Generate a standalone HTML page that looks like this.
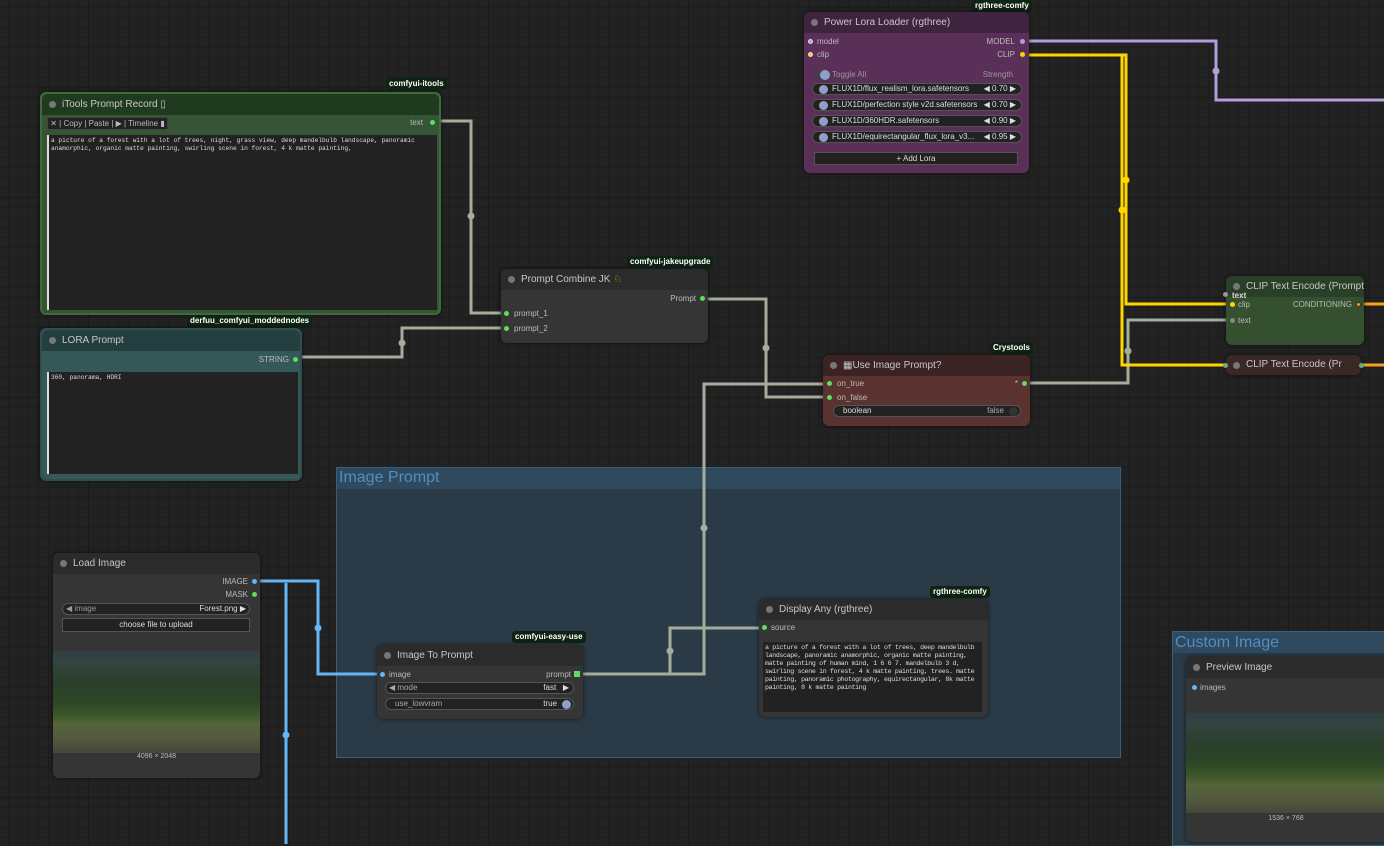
<!DOCTYPE html>
<html><head><meta charset="utf-8"><style>
*{box-sizing:border-box;margin:0;padding:0}
body{width:1384px;height:844px;overflow:hidden;position:relative;font-family:"Liberation Sans",sans-serif;
background-color:#222;
background-image:linear-gradient(#1a1a1a 1px,transparent 1px),linear-gradient(90deg,#1a1a1a 1px,transparent 1px),linear-gradient(#1d1d1d 1px,transparent 1px),linear-gradient(90deg,#1d1d1d 1px,transparent 1px);
background-size:100px 100px,100px 100px,10px 10px,10px 10px;background-position:-12px -3px}
.abs{position:absolute}
.node{position:absolute;border-radius:6px;background:#353535;box-shadow:0 0 4px rgba(0,0,0,.6);font-size:9px;color:#bbb}
.title{height:21px;border-radius:6px 6px 0 0;background:#2b2b2b;color:#c8c8c8;font-size:10px;line-height:21px;padding-left:20px;position:relative;white-space:nowrap;overflow:hidden}
.title:before{content:"";position:absolute;left:7px;top:7px;width:7px;height:7px;border-radius:50%;background:#777}
.badge{position:absolute;background:#0e2312;color:#fff;font-size:8px;font-weight:bold;height:12px;line-height:12px;padding:0 3px;border-radius:3px}
.slot{position:absolute;font-size:8px;color:#bbb;white-space:nowrap}
.dot{position:absolute;width:5px;height:5px;border-radius:50%}
.g{background:#5dde5d}
.ta{position:absolute;background:#222;font-family:"Liberation Mono",monospace;font-size:6.2px;color:#ddd;line-height:8px;padding:2px 2px}
.wid{position:absolute;height:12px;border-radius:6px;background:#222;border:1px solid #555;font-size:8px;color:#ddd;line-height:10px}
.forest{position:absolute;background:linear-gradient(180deg,#2f3f42 0%,#34443f 12%,#2a3f2c 30%,#2c4626 50%,#3a5628 62%,#55653a 72%,#535a3e 85%,#46483a 100%)}
</style></head><body>

<div class="abs" style="left:336px;top:467px;width:785px;height:291px;background:#2a3a47;border:1px solid #3b5f7a"></div>
<div class="abs" style="left:337px;top:468px;width:783px;height:21px;background:#2f4a5e;color:#4f8ec4;font-size:16px;line-height:20px;padding-left:2px">Image Prompt</div>
<div class="abs" style="left:1172px;top:631px;width:214px;height:215px;background:#2a3a47;border:1px solid #3b5f7a"></div>
<div class="abs" style="left:1173px;top:632px;width:212px;height:21px;background:#2f4a5e;color:#4f8ec4;font-size:16px;line-height:21px;padding-left:2px">Custom Image</div>

<svg class="abs" style="left:0;top:0" width="1384" height="844">
<g fill="none" stroke-width="3">
<g stroke="#a4ad9c">
<path d="M441 121H471V313H506"/>
<path d="M297 357H402V328H506"/>
<path d="M702 299H766V397H829"/>
<path d="M577 674H704V384H829"/>
<path d="M670 674V628H764"/>
<path d="M1024 383H1128V320H1232"/>
</g>
<path d="M1022 41H1216V100H1384" stroke="#b39ddb"/>
<path d="M1022 55H1126V304H1232" stroke="#ffd500"/>
<path d="M1022 55H1122V365H1226" stroke="#ffd500"/>
<path d="M1357 304H1384M1361 365H1384" stroke="#ff9f1a"/>
<path d="M254 581H318V674H382M286 583V844" stroke="#64b5f6"/>
</g>
<g fill="#a4ad9c"><circle cx="471" cy="216" r="3.5"/><circle cx="402" cy="343" r="3.5"/><circle cx="766" cy="348" r="3.5"/><circle cx="704" cy="528" r="3.5"/><circle cx="670" cy="651" r="3.5"/><circle cx="1128" cy="351" r="3.5"/></g>
<circle cx="1216" cy="71" r="3.5" fill="#b39ddb"/>
<circle cx="1126" cy="180" r="3.5" fill="#ffd500"/><circle cx="1122" cy="210" r="3.5" fill="#ffd500"/>
<circle cx="318" cy="628" r="3.5" fill="#64b5f6"/><circle cx="286" cy="735" r="3.5" fill="#64b5f6"/>
</svg>

<div class="badge" style="left:386px;top:78px">comfyui-itools</div>
<div class="node" style="left:40px;top:92px;width:401px;height:223px;background:#355535;border:2px solid #3d6b3d">
 <div class="title" style="background:#203a20">iTools Prompt Record ▯</div>
 <div class="abs" style="left:5px;top:23px;height:13px;background:#222;border:1px solid #444;font-size:8px;color:#bbb;line-height:11px;white-space:nowrap">&nbsp;✕ | Copy | Paste | ▶ | Timeline ▮&nbsp;</div>
 <div class="slot" style="right:16px;top:24px">text</div><div class="dot g" style="right:4px;top:26px"></div>
 <div class="ta" style="left:5px;top:41px;width:390px;height:175px;border-left:2px solid #ddd">a picture of a forest with a lot of trees, night, grass view, deep mandelbulb landscape, panoramic anamorphic, organic matte painting, swirling scene in forest, 4 k matte painting,</div>
</div>

<div class="badge" style="left:187px;top:315px">derfuu_comfyui_moddednodes</div>
<div class="node" style="left:40px;top:328px;width:262px;height:153px;background:#355858;border:2px solid #2f4f4f">
 <div class="title" style="background:#233e3e">LORA Prompt</div>
 <div class="slot" style="right:11px;top:25px">STRING</div><div class="dot g" style="right:2px;top:27px"></div>
 <div class="ta" style="left:5px;top:42px;width:251px;height:102px;border-left:2px solid #ddd">360, panorama, HDRI</div>
</div>

<div class="badge" style="left:627px;top:256px">comfyui-jakeupgrade</div>
<div class="node" style="left:501px;top:269px;width:207px;height:74px">
 <div class="title">Prompt Combine JK <span style="color:#c8a000">♘</span></div>
 <div class="slot" style="right:12px;top:25px">Prompt</div><div class="dot g" style="right:3px;top:27px"></div>
 <div class="dot g" style="left:3px;top:42px"></div><div class="slot" style="left:13px;top:40px">prompt_1</div>
 <div class="dot g" style="left:3px;top:57px"></div><div class="slot" style="left:13px;top:55px">prompt_2</div>
</div>

<div class="badge" style="left:972px;top:0px">rgthree-comfy</div>
<div class="node" style="left:804px;top:12px;width:225px;height:161px;background:#5a3058">
 <div class="title" style="background:#3f2440">Power Lora Loader (rgthree)</div>
 <div class="dot" style="left:4px;top:27px;background:#b39ddb;border:1px solid #ddd"></div><div class="slot" style="left:13px;top:25px">model</div>
 <div class="dot" style="left:4px;top:40px;background:#ffd500;border:1px solid #ddd"></div><div class="slot" style="left:13px;top:38px">clip</div>
 <div class="slot" style="right:14px;top:25px">MODEL</div><div class="dot" style="right:4px;top:27px;background:#b39ddb"></div>
 <div class="slot" style="right:14px;top:38px">CLIP</div><div class="dot" style="right:4px;top:40px;background:#ffd500"></div>
 <div class="abs" style="left:10px;top:59px;width:18px;height:9px;border-radius:5px;background:#4a3a50"></div><div class="dot" style="left:16px;top:58px;width:10px;height:10px;background:#8f9fc8"></div>
 <div class="slot" style="left:28px;top:58px;color:#999">Toggle All</div><div class="slot" style="right:16px;top:58px;color:#999">Strength</div>
 <div class="wid" style="left:8px;top:71px;width:210px"><span class="dot" style="left:6px;top:1px;width:9px;height:9px;background:#8f9fc8"></span><b style="position:absolute;left:19px;font-weight:normal">FLUX1D/flux_realism_lora.safetensors</b><span style="position:absolute;right:5px">◀ 0.70 ▶</span></div>
 <div class="wid" style="left:8px;top:87px;width:210px"><span class="dot" style="left:6px;top:1px;width:9px;height:9px;background:#8f9fc8"></span><b style="position:absolute;left:19px;font-weight:normal">FLUX1D/perfection style v2d.safetensors</b><span style="position:absolute;right:5px">◀ 0.70 ▶</span></div>
 <div class="wid" style="left:8px;top:103px;width:210px"><span class="dot" style="left:6px;top:1px;width:9px;height:9px;background:#8f9fc8"></span><b style="position:absolute;left:19px;font-weight:normal">FLUX1D/360HDR.safetensors</b><span style="position:absolute;right:5px">◀ 0.90 ▶</span></div>
 <div class="wid" style="left:8px;top:119px;width:210px"><span class="dot" style="left:6px;top:1px;width:9px;height:9px;background:#8f9fc8"></span><b style="position:absolute;left:19px;font-weight:normal">FLUX1D/equirectangular_flux_lora_v3...</b><span style="position:absolute;right:5px">◀ 0.95 ▶</span></div>
 <div class="abs" style="left:10px;top:140px;width:204px;height:13px;background:#222;border:1px solid #555;font-size:8px;color:#ddd;text-align:center;line-height:11px">+ Add Lora</div>
</div>

<div class="badge" style="left:990px;top:342px">Crystools</div>
<div class="node" style="left:823px;top:355px;width:207px;height:71px;background:#5a3230">
 <div class="title" style="background:#3a2322">▦Use Image Prompt?</div>
 <div class="dot g" style="left:4px;top:26px"></div><div class="slot" style="left:14px;top:24px">on_true</div>
 <div class="dot g" style="left:4px;top:40px"></div><div class="slot" style="left:14px;top:38px">on_false</div>
 <div class="slot" style="right:12px;top:24px">*</div><div class="dot g" style="right:3px;top:26px"></div>
 <div class="wid" style="left:10px;top:50px;width:188px"><span style="position:absolute;left:9px">boolean</span><span style="position:absolute;right:16px;color:#aaa">false</span><span class="dot" style="right:2px;top:1px;width:9px;height:9px;background:#333"></span></div>
</div>

<div class="node" style="left:1226px;top:276px;width:138px;height:69px;background:#34502f">
 <div class="title" style="background:#2a3f27">CLIP Text Encode (Prompt)</div>
 <div class="dot" style="left:-3px;top:16px;background:#999"></div><div class="slot" style="left:6px;top:15px;color:#ddd;font-weight:bold">text</div>
 <div class="dot" style="left:4px;top:26px;background:#ffd500"></div><div class="slot" style="left:12px;top:24px">clip</div>
 <div class="dot" style="left:4px;top:42px;background:#888"></div><div class="slot" style="left:12px;top:40px">text</div>
 <div class="slot" style="right:12px;top:24px">CONDITIONING</div><div class="dot" style="right:3px;top:26px;background:#ff9f1a;border:1px solid #333"></div>
</div>
<div class="node" style="left:1226px;top:355px;width:135px;height:20px;background:#3a2827;border-radius:6px">
 <div class="title" style="background:transparent;height:20px;line-height:20px">CLIP Text Encode (Pr</div>
 <div class="dot" style="left:-3px;top:8px;background:#6a8"></div><div class="dot" style="right:-3px;top:8px;background:#6a8"></div>
</div>

<div class="node" style="left:53px;top:553px;width:207px;height:225px">
 <div class="title">Load Image</div>
 <div class="slot" style="right:12px;top:24px">IMAGE</div><div class="dot" style="right:3px;top:26px;background:#64b5f6"></div>
 <div class="slot" style="right:12px;top:37px">MASK</div><div class="dot g" style="right:3px;top:39px"></div>
 <div class="wid" style="left:9px;top:50px;width:188px"><span style="position:absolute;left:3px;color:#999">◀ image</span><span style="position:absolute;right:3px">Forest.png ▶</span></div>
 <div class="abs" style="left:9px;top:65px;width:188px;height:14px;background:#222;border:1px solid #555;font-size:8px;color:#ddd;text-align:center;line-height:12px">choose file to upload</div>
 <div class="forest" style="left:0;top:98px;width:207px;height:102px"></div>
 <div class="slot" style="left:0;width:207px;text-align:center;top:200px;font-size:7px">4096 × 2048</div>
</div>

<div class="badge" style="left:512px;top:631px">comfyui-easy-use</div>
<div class="node" style="left:377px;top:645px;width:206px;height:74px">
 <div class="title">Image To Prompt</div>
 <div class="dot" style="left:3px;top:27px;background:#64b5f6"></div><div class="slot" style="left:12px;top:25px">image</div>
 <div class="slot" style="right:12px;top:25px">prompt</div><div class="abs" style="right:3px;top:26px;width:6px;height:6px;background:#5dde5d"></div>
 <div class="wid" style="left:8px;top:37px;width:189px"><span style="position:absolute;left:3px;color:#aaa">◀ mode</span><span style="position:absolute;right:4px">fast &nbsp;&nbsp;▶</span></div>
 <div class="wid" style="left:8px;top:53px;width:189px"><span style="position:absolute;left:9px;color:#aaa">use_lowvram</span><span style="position:absolute;right:16px">true</span><span class="dot" style="right:2px;top:1px;width:9px;height:9px;background:#8f9fc8"></span></div>
</div>

<div class="badge" style="left:930px;top:586px">rgthree-comfy</div>
<div class="node" style="left:759px;top:599px;width:229px;height:118px">
 <div class="title">Display Any (rgthree)</div>
 <div class="dot g" style="left:3px;top:26px"></div><div class="slot" style="left:12px;top:24px">source</div>
 <div class="ta" style="left:4px;top:43px;width:219px;height:70px;font-size:6.6px;letter-spacing:-0.35px">a picture of a forest with a lot of trees, deep mandelbulb landscape, panoramic anamorphic, organic matte painting, matte painting of human mind, 1 6 6 7. mandelbulb 3 d, swirling scene in forest, 4 k matte painting, trees. matte painting, panoramic photography, equirectangular, 8k matte painting, 8 k matte painting</div>
</div>

<div class="node" style="left:1186px;top:657px;width:200px;height:185px;border-radius:6px 0 0 6px">
 <div class="title">Preview Image</div>
 <div class="dot" style="left:6px;top:28px;background:#64b5f6"></div><div class="slot" style="left:14px;top:26px">images</div>
 <div class="forest" style="left:0;top:56px;width:200px;height:100px"></div>
 <div class="slot" style="left:0;width:200px;text-align:center;top:158px;font-size:7px">1536 × 768</div>
</div>

</body></html>
